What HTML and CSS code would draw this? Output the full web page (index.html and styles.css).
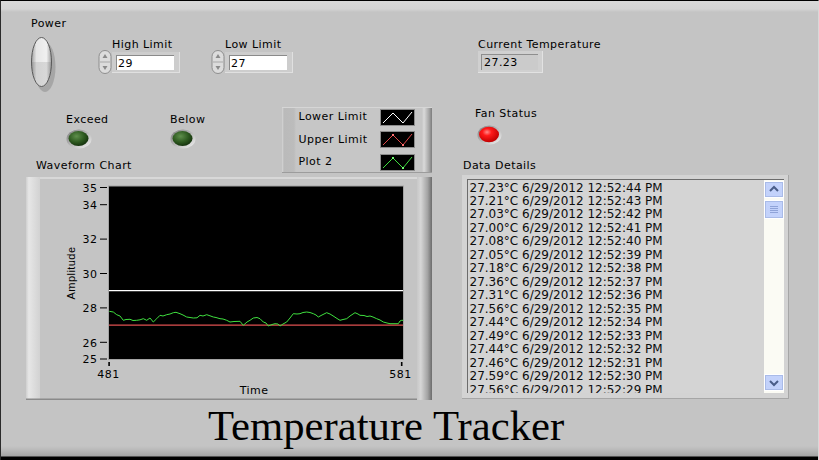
FILE: index.html
```html
<!DOCTYPE html>
<html>
<head>
<meta charset="utf-8">
<title>Temperature Tracker</title>
<link rel="stylesheet" href="styles.css">
</head>
<body>
<div class="panel">
  <div class="main">
    <div class="left">
      <div class="row-a">
        <div class="power">
          <div class="lbl">Power</div>
          <svg class="switch" width="28" height="56" viewBox="0 0 28 56">
            <defs>
              <clipPath id="ov"><ellipse cx="10.5" cy="25" rx="10" ry="24.5"/></clipPath>
              <linearGradient id="swh" x1="0" x2="1" y1="0" y2="0">
                <stop offset="0" stop-color="#9a9a9a"/>
                <stop offset="0.25" stop-color="#e6e6e6"/>
                <stop offset="0.7" stop-color="#f0f0f0"/>
                <stop offset="1" stop-color="#8c8c8c"/>
              </linearGradient>
              <linearGradient id="swl" x1="0" x2="1" y1="0" y2="0">
                <stop offset="0" stop-color="#909090"/>
                <stop offset="0.25" stop-color="#d2d2d2"/>
                <stop offset="0.7" stop-color="#d8d8d8"/>
                <stop offset="1" stop-color="#858585"/>
              </linearGradient>
            </defs>
            <ellipse cx="14" cy="30" rx="10.5" ry="25" fill="#8e8e8e" opacity="0.55"/>
            <g clip-path="url(#ov)">
              <rect x="0" y="0" width="22" height="25" fill="url(#swh)"/>
              <rect x="0" y="25" width="22" height="26" fill="url(#swl)"/>
            </g>
            <ellipse cx="10.5" cy="25" rx="10" ry="24.5" fill="none" stroke="#5a5a5a" stroke-width="1"/>
          </svg>
        </div>
        <div class="limit high">
          <div class="lbl limit-lbl">High Limit</div>
          <div class="ctl">
            <svg class="spin" width="14" height="24" viewBox="0 0 14 24">
              <rect x="1" y="0.5" width="12" height="23" rx="6" fill="#dcdcdc" stroke="#8e8e8e"/>
              <line x1="2" y1="12" x2="12" y2="12" stroke="#a8a8a8"/>
              <path d="M7 4 L4.5 8 L9.5 8 Z" fill="#8a8a8a"/>
              <path d="M7 20 L4.5 16 L9.5 16 Z" fill="#8a8a8a"/>
            </svg>
            <div class="numfield"><div class="numin">29</div></div>
          </div>
        </div>
        <div class="limit low">
          <div class="lbl limit-lbl">Low Limit</div>
          <div class="ctl">
            <svg class="spin" width="14" height="24" viewBox="0 0 14 24">
              <rect x="1" y="0.5" width="12" height="23" rx="6" fill="#dcdcdc" stroke="#8e8e8e"/>
              <line x1="2" y1="12" x2="12" y2="12" stroke="#a8a8a8"/>
              <path d="M7 4 L4.5 8 L9.5 8 Z" fill="#8a8a8a"/>
              <path d="M7 20 L4.5 16 L9.5 16 Z" fill="#8a8a8a"/>
            </svg>
            <div class="numfield"><div class="numin">27</div></div>
          </div>
        </div>
      </div>
      <div class="row-b">
        <div class="ledcol">
          <div class="leds">
            <div class="ledgrp exceed">
              <div class="lbl">Exceed</div>
              <svg class="led" width="26" height="20" viewBox="0 0 26 20">
                <defs>
                  <linearGradient id="rim" x1="0" y1="0" x2="1" y2="1">
                    <stop offset="0" stop-color="#7a7a7a"/>
                    <stop offset="0.5" stop-color="#b8b8b8"/>
                    <stop offset="1" stop-color="#f4f4f4"/>
                  </linearGradient>
                  <radialGradient id="grn" cx="0.4" cy="0.35" r="0.65">
                    <stop offset="0" stop-color="#5f8f4c"/>
                    <stop offset="0.6" stop-color="#2e5a20"/>
                    <stop offset="1" stop-color="#16340e"/>
                  </radialGradient>
                </defs>
                <ellipse cx="13" cy="10" rx="12.5" ry="9.5" fill="url(#rim)"/>
                <ellipse cx="12.5" cy="9.5" rx="10" ry="7.5" fill="url(#grn)"/>
              </svg>
            </div>
            <div class="ledgrp below">
              <div class="lbl">Below</div>
              <svg class="led" width="26" height="20" viewBox="0 0 26 20">
                <ellipse cx="13" cy="10" rx="12.5" ry="9.5" fill="url(#rim)"/>
                <ellipse cx="12.5" cy="9.5" rx="10" ry="7.5" fill="url(#grn)"/>
              </svg>
            </div>
          </div>
          <div class="lbl chartlbl">Waveform Chart</div>
        </div>
        <div class="legend">
          <div class="legrow">
            <div class="lbl leglbl">Lower Limit</div>
            <svg class="sw" width="35" height="17" viewBox="0 0 35 17">
              <rect x="0.5" y="0.5" width="34" height="16" fill="#000" stroke="#8c8c8c"/>
              <polyline points="3,14 13,4 23,14 32,3" fill="none" stroke="#ffffff" stroke-width="1"/>
            </svg>
          </div>
          <div class="legrow">
            <div class="lbl leglbl">Upper Limit</div>
            <svg class="sw" width="35" height="17" viewBox="0 0 35 17">
              <rect x="0.5" y="0.5" width="34" height="16" fill="#000" stroke="#8c8c8c"/>
              <polyline points="3,14 13,4 23,14 32,3" fill="none" stroke="#e04848" stroke-width="1"/>
              <rect x="12" y="3" width="2" height="2" fill="#ff7070"/>
              <rect x="22" y="13" width="2" height="2" fill="#ff7070"/>
            </svg>
          </div>
          <div class="legrow">
            <div class="lbl leglbl">Plot 2</div>
            <svg class="sw" width="35" height="17" viewBox="0 0 35 17">
              <rect x="0.5" y="0.5" width="34" height="16" fill="#000" stroke="#8c8c8c"/>
              <polyline points="3,14 13,4 23,14 32,3" fill="none" stroke="#3ee03e" stroke-width="1"/>
              <rect x="12" y="3" width="2" height="2" fill="#70ff70"/>
              <rect x="22" y="13" width="2" height="2" fill="#70ff70"/>
            </svg>
          </div>
        </div>
      </div>
      <svg class="chart" width="406" height="223" viewBox="26 175 406 223">
        <defs>
          <linearGradient id="cl" x1="0" x2="1">
            <stop offset="0" stop-color="#cfcfcf"/>
            <stop offset="0.2" stop-color="#e6e6e6"/>
            <stop offset="1" stop-color="#d2d2d2"/>
          </linearGradient>
          <linearGradient id="cr" x1="0" x2="1">
            <stop offset="0" stop-color="#c8c8c8"/>
            <stop offset="0.25" stop-color="#d6d6d6"/>
            <stop offset="0.7" stop-color="#a4a4a4"/>
            <stop offset="1" stop-color="#6c6c6c"/>
          </linearGradient>
        </defs>
        <rect x="26" y="175" width="406" height="223" fill="#c4c4c4"/>
        <rect x="26" y="175" width="406" height="2" fill="#d8d8d8"/>
        <rect x="26" y="175" width="14" height="222" fill="url(#cl)"/>
        <rect x="417" y="175" width="15" height="223" fill="url(#cr)"/>
        <rect x="26" y="396.5" width="391" height="1.5" fill="#8a8a8a"/>
        <rect x="108.5" y="184" width="295" height="173.5" fill="#000" stroke="#a4a4a4" stroke-width="1"/>
        <line x1="109" y1="288.7" x2="403" y2="288.7" stroke="#ffffff" stroke-width="1.2"/>
        <line x1="109" y1="323.1" x2="403" y2="323.1" stroke="#e05050" stroke-width="1.2"/>
        <polyline fill="none" stroke="#3fe03f" stroke-width="1" points="109.3,309.3 113.3,310 116.7,312.7 120,314 123.3,318.3 126,317.5 130,317.3 133,318.5 136.7,318.3 140,317.8 143.3,316.7 146.7,318.3 150,316 153.3,320 156.7,316.7 160,313.3 163,314 166.7,312.7 170,312 173.3,310.7 176,310.3 180,311.7 183,313 186.7,315 190,315.5 193.3,316 197,315.8 200,313.3 203,314 206.7,312.7 210,313.8 213.3,315 216,315.5 220,316.7 223,317 226.7,318.3 230,320 234,319.5 240,319.3 243.3,323.3 247,320 250,318.3 253.3,316 257,315.5 260,316.7 263.3,320 266,321 268.3,324 272,322.5 275,321.7 278,322 280,324 283,322 286.7,320 290,316 293.3,311.7 297,312 300,311.7 303,310.5 306.7,310 310,310.5 313.3,311.7 316,313 318.3,315 322,313 326.7,310.7 330,312 334,314.5 337,316.5 340,318.3 343,317.5 346.7,316.7 350,314 355,310.7 358,312 360,313.3 364,313.5 367,314.5 370,314 373,315 376.7,316.7 380,318 383.3,320 387,321 390,321.7 394,321.7 398.3,321.7 400,319 401.7,318.3 403.3,318.3"/>
        <g stroke="#000" stroke-width="1">
          <line x1="100" y1="185.5" x2="107" y2="185.5"/>
          <line x1="100" y1="202.7" x2="107" y2="202.7"/>
          <line x1="100" y1="237.1" x2="107" y2="237.1"/>
          <line x1="100" y1="271.5" x2="107" y2="271.5"/>
          <line x1="100" y1="305.9" x2="107" y2="305.9"/>
          <line x1="100" y1="340.3" x2="107" y2="340.3"/>
          <line x1="100" y1="357" x2="107" y2="357"/>
        </g>
        <g class="ax" text-anchor="end">
          <text x="97.5" y="189.8">35</text>
          <text x="97.5" y="207">34</text>
          <text x="97.5" y="241.4">32</text>
          <text x="97.5" y="275.8">30</text>
          <text x="97.5" y="310.2">28</text>
          <text x="97.5" y="344.6">26</text>
          <text x="97.5" y="361.3">25</text>
        </g>
        <rect x="108.3" y="360" width="1.6" height="4" fill="#000"/>
        <rect x="400.9" y="360" width="1.6" height="4" fill="#000"/>
        <g class="ax" text-anchor="middle">
          <text x="108.5" y="376">481</text>
          <text x="400.5" y="376">581</text>
          <text x="254" y="392">Time</text>
        </g>
        <text class="amp" transform="translate(75,271) rotate(-90)" text-anchor="middle">Amplitude</text>
      </svg>
    </div>
    <div class="right">
      <div class="lbl ct-lbl">Current Temperature</div>
      <div class="indicator"><div class="indin">27.23</div></div>
      <div class="lbl fan-lbl">Fan Status</div>
      <svg class="fanled" width="25" height="20" viewBox="0 0 25 20">
        <defs>
          <radialGradient id="red" cx="0.4" cy="0.35" r="0.65">
            <stop offset="0" stop-color="#ff8a8a"/>
            <stop offset="0.35" stop-color="#ff1a1a"/>
            <stop offset="1" stop-color="#c00000"/>
          </radialGradient>
        </defs>
        <ellipse cx="12.5" cy="10" rx="12" ry="9.5" fill="url(#rim)"/>
        <ellipse cx="12" cy="9.5" rx="10" ry="7.8" fill="url(#red)"/>
      </svg>
      <div class="lbl dd-lbl">Data Details</div>
      <div class="list">
        <div class="listin">
          <div class="lines">
            <div>27.23°C 6/29/2012 12:52:44 PM</div>
            <div>27.21°C 6/29/2012 12:52:43 PM</div>
            <div>27.03°C 6/29/2012 12:52:42 PM</div>
            <div>27.00°C 6/29/2012 12:52:41 PM</div>
            <div>27.08°C 6/29/2012 12:52:40 PM</div>
            <div>27.05°C 6/29/2012 12:52:39 PM</div>
            <div>27.18°C 6/29/2012 12:52:38 PM</div>
            <div>27.36°C 6/29/2012 12:52:37 PM</div>
            <div>27.31°C 6/29/2012 12:52:36 PM</div>
            <div>27.56°C 6/29/2012 12:52:35 PM</div>
            <div>27.44°C 6/29/2012 12:52:34 PM</div>
            <div>27.49°C 6/29/2012 12:52:33 PM</div>
            <div>27.44°C 6/29/2012 12:52:32 PM</div>
            <div>27.46°C 6/29/2012 12:52:31 PM</div>
            <div>27.59°C 6/29/2012 12:52:30 PM</div>
            <div>27.56°C 6/29/2012 12:52:29 PM</div>
          </div>
          <div class="scroll">
            <svg class="sbtn" width="20" height="17" viewBox="0 0 20 17">
              <rect x="0.5" y="0.5" width="19" height="16" fill="#c3d2fb" stroke="#ffffff"/>
              <rect x="1.5" y="1.5" width="17" height="14" fill="none" stroke="#a9bbe8"/>
              <polyline points="6,10 10,6 14,10" fill="none" stroke="#4a5d88" stroke-width="2"/>
            </svg>
            <svg class="thumb" width="20" height="19" viewBox="0 0 20 19">
              <rect x="0.5" y="0.5" width="19" height="18" fill="#c3d2fb" stroke="#ffffff"/>
              <rect x="1.5" y="1.5" width="17" height="16" fill="none" stroke="#a9bbe8"/>
              <g stroke="#8fa3d8" stroke-width="1">
                <line x1="6" y1="6.5" x2="14" y2="6.5"/>
                <line x1="6" y1="8.5" x2="14" y2="8.5"/>
                <line x1="6" y1="10.5" x2="14" y2="10.5"/>
                <line x1="6" y1="12.5" x2="14" y2="12.5"/>
              </g>
            </svg>
            <svg class="sbtn down" width="20" height="17" viewBox="0 0 20 17">
              <rect x="0.5" y="0.5" width="19" height="16" fill="#c3d2fb" stroke="#ffffff"/>
              <rect x="1.5" y="1.5" width="17" height="14" fill="none" stroke="#a9bbe8"/>
              <polyline points="6,7 10,11 14,7" fill="none" stroke="#4a5d88" stroke-width="2"/>
            </svg>
          </div>
        </div>
      </div>
    </div>
  </div>
  <div class="title">Temperature Tracker</div>
</div>
</body>
</html>
```
FILE: styles.css
```css
body {
  margin: 0;
  background: #000;
}
.panel {
  width: 819px;
  height: 460px;
  box-sizing: border-box;
  border-top: 1px solid #000;
  border-left: 1px solid #2a2a2a;
  border-right: 1px solid #d8d8d8;
  background: linear-gradient(to bottom, #d9d9d9 0, #d4d4d4 8px, #c4c4c4 11px, #c4c4c4 445px, #b6b6b6 450px, #a4a4a4 455px, #000 456px);
  font-family: "DejaVu Sans", sans-serif;
  font-size: 11px;
  letter-spacing: 0.45px;
  color: #000;
  display: flex;
  flex-direction: column;
  overflow: hidden;
}
.main {
  display: flex;
  padding: 16px 0 0 25px;
}
.lbl {
  height: 14px;
  line-height: 14px;
  white-space: nowrap;
}
.left {
  width: 406px;
  display: flex;
  flex-direction: column;
}
.row-a {
  height: 90px;
  display: flex;
  align-items: flex-start;
}
.power {
  width: 40px;
  margin-left: 5px;
  display: flex;
  flex-direction: column;
}
.switch {
  display: block;
  margin-top: 6px;
}
.limit {
  margin-top: 21px;
  display: flex;
  flex-direction: column;
}
.high {
  margin-left: 27px;
}
.low {
  margin-left: 31px;
}
.limit-lbl {
  padding-left: 14px;
}
.ctl {
  display: flex;
  align-items: center;
  margin-top: -2px;
}
.spin {
  display: block;
}
.numfield {
  width: 68px;
  height: 21px;
  box-sizing: border-box;
  padding: 3px 5px 3px 4px;
  background: #cdcdcd;
  border-right: 1px solid #e0e0e0;
  border-bottom: 1px solid #e0e0e0;
}
.numin {
  height: 15px;
  line-height: 15px;
  background: #fff;
  border-top: 1px solid #8a8a8a;
  border-left: 1px solid #8a8a8a;
  box-sizing: border-box;
  padding-left: 1px;
}
.row-b {
  height: 68px;
  display: flex;
}
.ledcol {
  width: 256px;
  display: flex;
  flex-direction: column;
}
.leds {
  display: flex;
  padding-top: 6px;
}
.ledgrp {
  display: flex;
  flex-direction: column;
}
.exceed {
  width: 60px;
  margin-left: 40px;
}
.below {
  margin-left: 44px;
}
.led {
  display: block;
  margin-top: 2px;
}
.chartlbl {
  margin-top: auto;
  margin-left: 10px;
  margin-bottom: 2px;
}
.legend {
  width: 150px;
  height: 66px;
  box-sizing: border-box;
  border-top: 1px solid #d6d6d6;
  border-bottom: 1px solid #9c9c9c;
  background: linear-gradient(to right, #d6d6d6 0, #bababa 2px, #bcbcbc 12px, #c6c6c6 14px, #c6c6c6 140px, #dadada 142px, #a6a6a6 147px, #7c7c7c 150px);
  display: flex;
  flex-direction: column;
  gap: 5.5px;
  padding-top: 0.5px;
}
.legrow {
  height: 17px;
  display: flex;
  align-items: center;
  padding-left: 16.5px;
}
.leglbl {
  width: 81px;
}
.sw {
  display: block;
}
.chart {
  display: block;
  margin-top: 2px;
}
.ax {
  font-family: "DejaVu Sans", sans-serif;
  font-size: 11px;
  letter-spacing: 0.45px;
  fill: #000;
}
.amp {
  font-family: "Liberation Sans", sans-serif;
  font-size: 11px;
  fill: #000;
}
.right {
  width: 328px;
  margin-left: 30px;
  display: flex;
  flex-direction: column;
  align-items: flex-start;
}
.ct-lbl {
  margin-top: 20.5px;
  margin-left: 16px;
}
.indicator {
  width: 65px;
  height: 22px;
  box-sizing: border-box;
  margin-left: 16px;
  margin-top: -0.5px;
  padding: 3px 4px 3px 3px;
  background: #d0d0d0;
  border-right: 1px solid #e2e2e2;
  border-bottom: 1px solid #e2e2e2;
}
.indin {
  height: 16px;
  line-height: 15px;
  box-sizing: border-box;
  background: #cbcbcb;
  border-top: 1px solid #8e8e8e;
  border-left: 1px solid #8e8e8e;
  padding-left: 2px;
}
.fan-lbl {
  margin-top: 33.5px;
  margin-left: 13px;
}
.fanled {
  display: block;
  margin-top: 4px;
  margin-left: 15px;
}
.dd-lbl {
  margin-top: 14.5px;
  margin-left: 1px;
}
.list {
  width: 327px;
  height: 224px;
  box-sizing: border-box;
  margin-top: 2px;
  padding: 4px 4px 5px 5px;
  background: #d3d3d3;
  border-right: 1px solid #a6a6a6;
  border-bottom: 1px solid #a6a6a6;
}
.listin {
  height: 100%;
  box-sizing: border-box;
  display: flex;
  border-top: 1px solid #6c6c6c;
  border-left: 1px solid #6c6c6c;
  background: #d4d4d4;
}
.lines {
  flex: 1;
  overflow: hidden;
  font-size: 12px;
  letter-spacing: 0;
  line-height: 13.47px;
  padding: 1.5px 0 0 1.5px;
  white-space: nowrap;
  color: #0c0c0c;
}
.scroll {
  width: 20px;
  background: #fbfbf4;
  display: flex;
  flex-direction: column;
  padding: 0.5px 0 2px 0;
}
.sbtn, .thumb {
  display: block;
}
.thumb {
  margin-top: 2px;
}
.down {
  margin-top: auto;
}
.title {
  margin-top: 5px;
  padding-left: 207px;
  font-family: "Liberation Serif", "Times New Roman", serif;
  font-size: 42.7px;
  line-height: 42px;
  letter-spacing: 0;
  white-space: nowrap;
}
```
